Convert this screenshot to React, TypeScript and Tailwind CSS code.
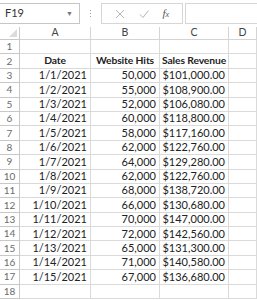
import React from "react";

const rows: [string, string, string][] = [
  ["1/1/2021", "50,000", "$101,000.00"],
  ["1/2/2021", "55,000", "$108,900.00"],
  ["1/3/2021", "52,000", "$106,080.00"],
  ["1/4/2021", "60,000", "$118,800.00"],
  ["1/5/2021", "58,000", "$117,160.00"],
  ["1/6/2021", "62,000", "$122,760.00"],
  ["1/7/2021", "64,000", "$129,280.00"],
  ["1/8/2021", "62,000", "$122,760.00"],
  ["1/9/2021", "68,000", "$138,720.00"],
  ["1/10/2021", "66,000", "$130,680.00"],
  ["1/11/2021", "70,000", "$147,000.00"],
  ["1/12/2021", "72,000", "$142,560.00"],
  ["1/13/2021", "65,000", "$131,300.00"],
  ["1/14/2021", "71,000", "$140,580.00"],
  ["1/15/2021", "67,000", "$136,680.00"],
];

const cell = "h-[14.4px] border-b border-r border-[#dadada] flex items-center overflow-hidden whitespace-nowrap";
const rh = "h-[14.4px] border-b border-r border-[#c8c8c8] flex items-center justify-center text-[#6b6b6b] text-[10px]";

export default function App() {
  const all: [string, string, string][] = [["", "", ""], ["Date", "Website Hits", "Sales Revenue"], ...rows, ["", "", ""]];
  return (
    <div className="w-[257px] h-[300px] overflow-hidden bg-white text-[#222]" style={{ fontFamily: 'Lato, "Open Sans", sans-serif' }}>
      {/* top bar */}
      <div className="h-[27px] flex items-start pt-[3px]">
        <div className="w-[80px] h-[21px] border border-l-0 border-[#c6c6c6] flex items-center pl-[5px] pr-[6px] justify-between text-[11px] text-[#333]">
          <span>F19</span>
          <span className="text-[7px] text-[#777]">▼</span>
        </div>
        <div className="w-[21px] h-[21px] flex flex-col items-center justify-center gap-[2px]">
          <span className="w-[1px] h-[1px] bg-[#999]" />
          <span className="w-[1px] h-[1px] bg-[#999]" />
          <span className="w-[1px] h-[1px] bg-[#999]" />
        </div>
        <div className="w-[82px] h-[21px] border border-[#d6d6d6] flex items-center justify-around px-[6px]">
          <svg width="10" height="10" viewBox="0 0 10 10"><path d="M1 1L9 9M9 1L1 9" stroke="#b5b5b5" strokeWidth="1" /></svg>
          <svg width="10" height="10" viewBox="0 0 10 10"><path d="M1 5.5L4 8.5L9.5 1.5" stroke="#b5b5b5" strokeWidth="1" fill="none" /></svg>
          <span className="text-[11px] italic text-[#555]" style={{ fontFamily: '"Liberation Serif", serif' }}>f<span className="text-[8px]">x</span></span>
        </div>
        <div className="flex-1 ml-[2px] h-[21px] border border-r-0 border-[#d6d6d6]" />
      </div>
      {/* grid */}
      <div className="grid grid-cols-[20px_71px_69px_69px_1fr]">
        <div className="h-[13px] border-b border-r border-[#c8c8c8] relative">
          <svg className="absolute right-[2px] bottom-[2px]" width="8" height="8" viewBox="0 0 8 8"><path d="M8 0L8 8L0 8Z" fill="#dcdcdc" /></svg>
        </div>
        {["A", "B", "C", "D"].map((c) => (
          <div key={c} className="h-[13px] border-b border-r border-[#d4d4d4] flex items-center justify-center text-[10.5px] text-[#444]">{c}</div>
        ))}
        {all.map((r, i) => {
          const hdr = i === 1;
          const cls = `${cell} ${hdr ? "justify-center font-bold text-[10.3px] tracking-[-0.1px]" : "justify-end pr-[3px] text-[11px]"}`;
          return (
            <React.Fragment key={i}>
              <div className={rh}>{i + 1}</div>
              <div className={cls}>{r[0]}</div>
              <div className={cls}>{r[1]}</div>
              <div className={cls}>{r[2]}</div>
              <div className={cell} />
            </React.Fragment>
          );
        })}
      </div>
    </div>
  );
}
